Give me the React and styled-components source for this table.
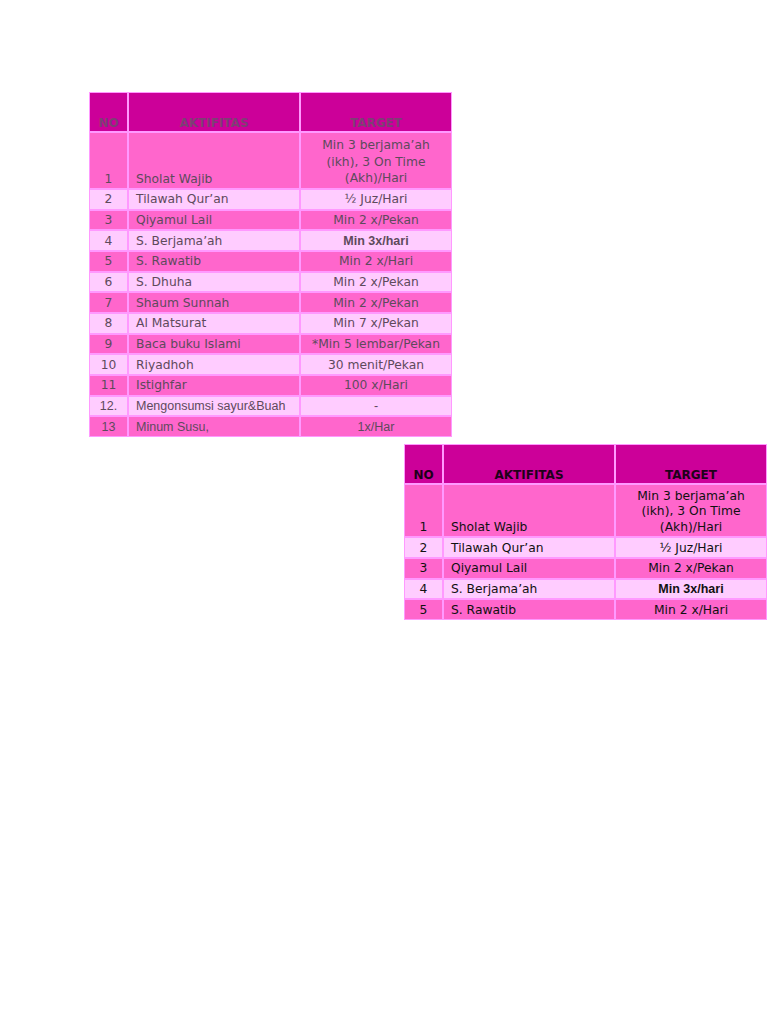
import React from "react";
import styled, { createGlobalStyle } from "styled-components";

const GlobalStyle = createGlobalStyle`
  html, body { margin: 0; padding: 0; background: #ffffff; }
  body { font-family: "DejaVu Sans", "Noto Sans", sans-serif; }
`;

const Page = styled.div`
  width: 768px;
  min-height: 1024px;
  box-sizing: border-box;
  padding: 92px 0 0 89px;
  display: flex;
  flex-direction: column;
  align-items: flex-start;
`;

const Table = styled.table`
  border-collapse: separate;
  border-spacing: 0;
  table-layout: fixed;
  width: 363px;
  margin-left: ${(p) => p.$offsetX || 0}px;
  margin-top: ${(p) => p.$offsetY || 0}px;
  color: ${(p) => p.$ink};
`;

const Col = styled.col`
  width: ${(p) => p.$w}px;
`;

const HeadCell = styled.th`
  box-sizing: border-box;
  background: #cc0099;
  border: 1px solid #ff99ff;
  padding: 22px 4px 0;
  font-family: "DejaVu Sans", sans-serif;
  font-weight: bold;
  font-size: 12px;
  line-height: 16px;
  text-align: center;
  vertical-align: bottom;
  color: ${(p) => p.$ink};
`;

const Cell = styled.td`
  box-sizing: border-box;
  background: ${(p) => (p.$dark ? "#ff66cc" : "#ffccff")};
  border: 1px solid #ff99ff;
  padding: ${(p) => (p.$tall ? "4px 6px 1px" : "1.34px 6px")};
  font-family: ${(p) =>
    p.$arial ? '"Liberation Sans", Arial, sans-serif' : '"DejaVu Sans", sans-serif'};
  font-weight: ${(p) => (p.$bold ? "bold" : "normal")};
  font-size: ${(p) => (p.$arial ? "12.5px" : "12.3px")};
  line-height: ${(p) => (p.$lh ? p.$lh : 16)}px;
  text-align: ${(p) => p.$align || "left"};
  vertical-align: ${(p) => (p.$tall ? "bottom" : "middle")};
  white-space: nowrap;
  overflow: hidden;
  padding-left: ${(p) => (p.$align === "left" ? 7 : 2)}px;
  padding-right: 2px;
`;

const rowsA = [
  { no: "2", act: "Tilawah Qur’an", target: "½ Juz/Hari" },
  { no: "3", act: "Qiyamul Lail", target: "Min 2 x/Pekan" },
  { no: "4", act: "S. Berjama’ah", target: "Min 3x/hari", tBold: true },
  { no: "5", act: "S. Rawatib", target: "Min 2 x/Hari" },
  { no: "6", act: "S. Dhuha", target: "Min 2 x/Pekan" },
  { no: "7", act: "Shaum Sunnah", target: "Min 2 x/Pekan" },
  { no: "8", act: "Al Matsurat", target: "Min 7 x/Pekan" },
  { no: "9", act: "Baca buku Islami", target: "*Min 5 lembar/Pekan" },
  { no: "10", act: "Riyadhoh", target: "30 menit/Pekan" },
  { no: "11", act: "Istighfar", target: "100 x/Hari" },
  { no: "12.", act: "Mengonsumsi sayur&Buah", target: "-", arial: true },
  { no: "13", act: "Minum Susu,", target: "1x/Har", arial: true },
];

function ActivityTable({ rows, ink, headInk, firstLh, offsetX, offsetY }) {
  return (
    <Table $ink={ink} $offsetX={offsetX} $offsetY={offsetY}>
      <colgroup>
        <Col $w={39} />
        <Col $w={172} />
        <Col $w={152} />
      </colgroup>
      <thead>
        <tr>
          <HeadCell $ink={headInk}>NO</HeadCell>
          <HeadCell $ink={headInk}>AKTIFITAS</HeadCell>
          <HeadCell $ink={headInk}>TARGET</HeadCell>
        </tr>
      </thead>
      <tbody>
        <tr>
          <Cell $dark $tall $align="center">1</Cell>
          <Cell $dark $tall $align="left">Sholat Wajib</Cell>
          <Cell $dark $tall $align="center" $lh={firstLh}>
            Min 3 berjama’ah
            <br />
            (ikh), 3 On Time
            <br />
            (Akh)/Hari
          </Cell>
        </tr>
        {rows.map((r, i) => {
          const dark = i % 2 === 1;
          return (
            <tr key={r.no}>
              <Cell $dark={dark} $align="center" $arial={r.arial}>
                {r.no}
              </Cell>
              <Cell $dark={dark} $align="left" $arial={r.arial}>
                {r.act}
              </Cell>
              <Cell
                $dark={dark}
                $align="center"
                $arial={r.arial || r.tBold}
                $bold={r.tBold}
              >
                {r.target}
              </Cell>
            </tr>
          );
        })}
      </tbody>
    </Table>
  );
}

export default function App() {
  return (
    <>
      <GlobalStyle />
      <Page>
        <ActivityTable
          rows={rowsA}
          ink="#5e4a5c"
          headInk="#7d3f74"
          firstLh={16.7}
        />
        <ActivityTable
          rows={rowsA.slice(0, 4)}
          ink="#111111"
          headInk="#1e001a"
          firstLh={15.5}
          offsetX={315}
          offsetY={7}
        />
      </Page>
    </>
  );
}
